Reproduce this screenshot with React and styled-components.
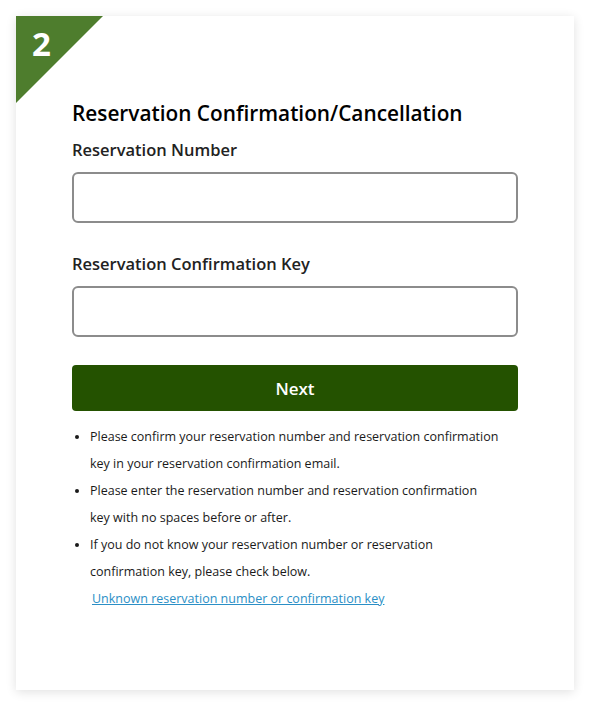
import React from 'react'
import styled, { createGlobalStyle } from 'styled-components'

const Global = createGlobalStyle`
    body {
        margin: 0;
        background: #fff;
        font-family: "Open Sans", "Noto Sans", sans-serif;
        color: #111;
    }
`;

const Page = styled.div`
    padding: 16px;
`;

const Card = styled.div`
    position: relative;
    width: 558px;
    height: 674px;
    box-sizing: border-box;
    background: #fff;
    box-shadow: 0 2px 10px rgba(0, 0, 0, 0.12);
    padding: 83px 56px 0 56px;
`;

const Corner = styled.div`
    position: absolute;
    top: 0;
    left: 0;
    width: 87px;
    height: 87px;
    background: #4e7d2d;
    clip-path: polygon(0 0, 100% 0, 0 100%);
`;

const Step = styled.span`
    position: absolute;
    top: 5px;
    left: 16px;
    color: #fff;
    font-size: 33px;
    font-weight: 700;
`;

const Title = styled.h2`
    margin: 0 0 11px;
    font-size: 20.8px;
    font-weight: 600;
    line-height: 28px;
    color: #000;
`;

const Label = styled.label`
    display: block;
    font-size: 16.5px;
    font-weight: 600;
    color: #222;
    line-height: 24px;
    margin-bottom: 10px;
`;

const Field = styled.div`
    margin-bottom: ${p => p.gap}px;
`;

const Input = styled.input`
    display: block;
    width: 100%;
    height: 51px;
    box-sizing: border-box;
    border: 2px solid #8c8c8c;
    border-radius: 6px;
    font-size: 16px;
    padding: 0 12px;
    outline: none;
`;

const NextButton = styled.button`
    display: block;
    width: 100%;
    height: 46px;
    border: none;
    border-radius: 4px;
    background: #245200;
    color: #fff;
    font-family: inherit;
    font-size: 17px;
    font-weight: 600;
    margin-bottom: 12px;
`;

const Notes = styled.ul`
    margin: 0;
    padding: 0 0 0 18px;
    font-size: 12.5px;
    line-height: 27px;
    color: #1a1a1a;
    li {
        white-space: nowrap;
    }
`;

const HelpLink = styled.a`
    display: block;
    margin-left: 20px;
    font-size: 12.5px;
    line-height: 27px;
    color: #2b8fc6;
    text-decoration: underline;
`;

export default function App() {
    return (
        <Page>
            <Global />
            <Card>
                <Corner />
                <Step>2</Step>
                <Title>Reservation Confirmation/Cancellation</Title>
                <Field gap={29}>
                    <Label>Reservation Number</Label>
                    <Input />
                </Field>
                <Field gap={28}>
                    <Label>Reservation Confirmation Key</Label>
                    <Input />
                </Field>
                <NextButton>Next</NextButton>
                <Notes>
                    <li>Please confirm your reservation number and reservation confirmation<br />key in your reservation confirmation email.</li>
                    <li>Please enter the reservation number and reservation confirmation<br />key with no spaces before or after.</li>
                    <li>If you do not know your reservation number or reservation<br />confirmation key, please check below.</li>
                </Notes>
                <HelpLink href="#">Unknown reservation number or confirmation key</HelpLink>
            </Card>
        </Page>
    )
}
